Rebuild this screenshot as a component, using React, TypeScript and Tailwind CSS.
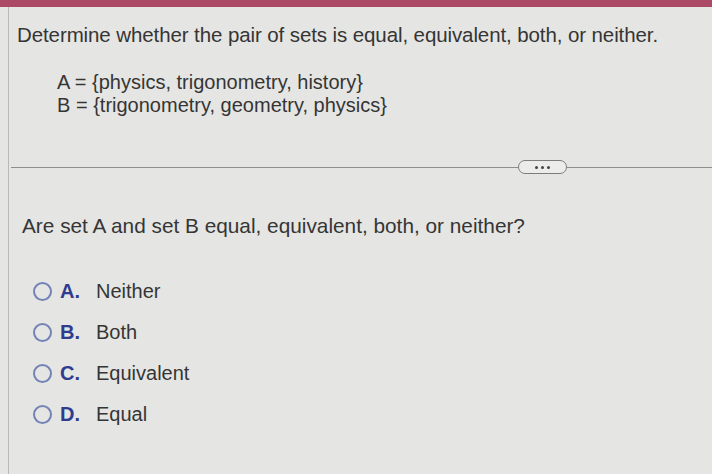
import React from 'react';

const options = [
  { letter: 'A.', label: 'Neither' },
  { letter: 'B.', label: 'Both' },
  { letter: 'C.', label: 'Equivalent' },
  { letter: 'D.', label: 'Equal' },
];

export default function App() {
  return (
    <div
      className="w-[712px] h-[474px] overflow-hidden bg-[#e5e5e3] text-[#353535] flex flex-col"
      style={{ fontFamily: '"Liberation Sans", Arial, sans-serif' }}
    >
      {/* top bar */}
      <div className="h-[7px] bg-[#ac4966] shrink-0" />

      <div className="flex-1 flex flex-col border-l border-[#b9b9b7] ml-[8px]">
        <p className="mt-[16px] ml-[8px] text-[20.5px] leading-[24px] tracking-[-0.1px]">
          Determine whether the pair of sets is equal, equivalent, both, or neither.
        </p>

        <div className="mt-[24px] ml-[48px] text-[20px] leading-[23px]">
          <p>A = {'{'}physics, trigonometry, history{'}'}</p>
          <p>B = {'{'}trigonometry, geometry, physics{'}'}</p>
        </div>

        {/* divider */}
        <div className="mt-[43px] flex items-center">
          <div className="w-[507px] h-px bg-[#8e8e8c] ml-[2px]" />
          <div className="w-[49px] h-[14px] rounded-full border border-[#7d7d7b] bg-[#ecedeb] flex items-center justify-center gap-[3px]">
            <span className="w-[3px] h-[3px] rounded-full bg-[#444]" />
            <span className="w-[3px] h-[3px] rounded-full bg-[#444]" />
            <span className="w-[3px] h-[3px] rounded-full bg-[#444]" />
          </div>
          <div className="flex-1 h-px bg-[#8e8e8c]" />
        </div>

        <p className="mt-[40px] ml-[13px] text-[20.8px] leading-[24px]">
          Are set A and set B equal, equivalent, both, or neither?
        </p>

        <div className="mt-[41px] ml-[24px] flex flex-col gap-[17px]">
          {options.map((o) => (
            <div key={o.letter} className="flex items-center h-[24px] text-[20px]">
              <span className="w-[19px] h-[19px] rounded-full border-2 border-[#7483b5] shrink-0" />
              <span className="ml-[8px] w-[36px] font-bold text-[#2f3b8f]">{o.letter}</span>
              <span>{o.label}</span>
            </div>
          ))}
        </div>
      </div>
    </div>
  );
}
